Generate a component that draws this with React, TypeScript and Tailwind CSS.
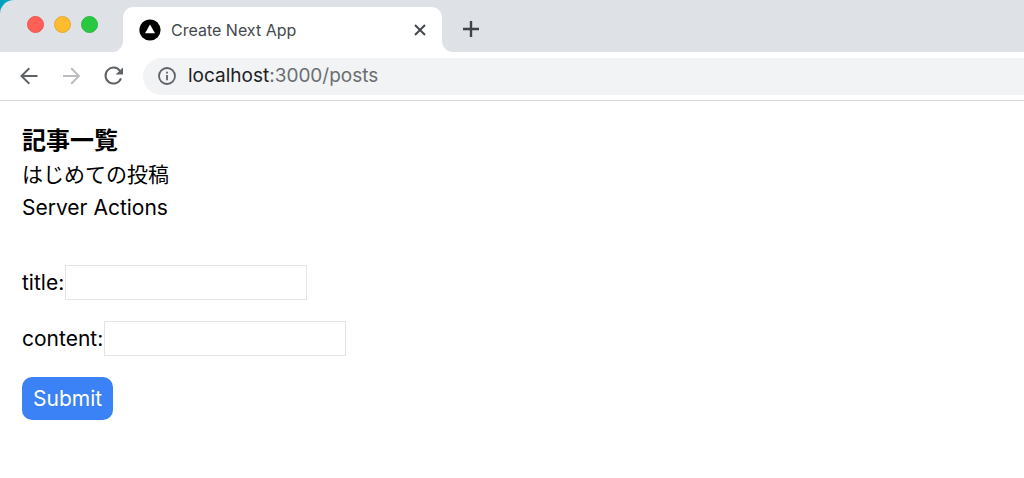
import React from "react";

function Favicon() {
  return (
    <svg width="22" height="22" viewBox="0 0 22 22" className="shrink-0" aria-hidden="true">
      <circle cx="11" cy="11" r="10.6" fill="#000" />
      <path d="M11 5.6 L16 14.2 H6 Z" fill="#fff" />
    </svg>
  );
}

function TabStrip() {
  return (
    <div className="flex h-[52px] bg-white">
      <div className="w-5 shrink-0 bg-[#00a0c0]">
        <div className="h-full rounded-tl-[14px] bg-[#dee1e6]" />
      </div>
      <div className="flex w-[103px] shrink-0 items-start gap-[10px] rounded-br-[11px] bg-[#dee1e6] pt-4 pl-[7px]">
        <button aria-label="Close window" className="size-[17px] shrink-0 rounded-full border border-[#ec564e] bg-[#ff5f57]" />
        <button aria-label="Minimize window" className="size-[17px] shrink-0 rounded-full border border-[#e6a935] bg-[#febc2e]" />
        <button aria-label="Zoom window" className="size-[17px] shrink-0 rounded-full border border-[#2db742] bg-[#28c840]" />
      </div>
      <div className="w-[319px] shrink-0 bg-[#dee1e6] pt-[7px]">
        <div className="flex h-[45px] items-center rounded-t-[10px] bg-white pr-[14px] pl-4">
          <Favicon />
          <span className="ml-[10px] flex-1 text-[16px] leading-6 text-[#45494d]">Create Next App</span>
          <button aria-label="Close tab">
            <svg width="16" height="16" viewBox="0 0 16 16" fill="none" stroke="#45494d" strokeWidth="2">
              <path d="M3 3 L13 13 M13 3 L3 13" />
            </svg>
          </button>
        </div>
      </div>
      <div className="flex flex-1 items-center rounded-bl-[11px] bg-[#dee1e6] pt-[6px] pl-5">
        <button aria-label="New tab">
          <svg width="18" height="18" viewBox="0 0 18 18" fill="none" stroke="#3f4347" strokeWidth="2.4">
            <path d="M9 1 V17 M1 9 H17" />
          </svg>
        </button>
      </div>
    </div>
  );
}

function Toolbar() {
  return (
    <div className="flex h-[49px] items-center border-b border-[#d9dadc] bg-white pl-[18px]">
      <div className="flex shrink-0 gap-5">
        <button aria-label="Back">
          <svg width="22" height="22" viewBox="0 0 22 22" fill="none" stroke="#5f6368" strokeWidth="2">
            <path d="M19.5 11 H4 M11.3 3.2 L3.5 11 L11.3 18.8" />
          </svg>
        </button>
        <button aria-label="Forward">
          <svg width="22" height="22" viewBox="0 0 22 22" fill="none" stroke="#bbbdc0" strokeWidth="2">
            <path d="M3 11 H18.5 M11.2 3.2 L19 11 L11.2 18.8" />
          </svg>
        </button>
        <button aria-label="Reload">
          <svg width="22" height="22" viewBox="0 0 22 22" fill="none">
            <path d="M18 5.8 A8 8 0 1 0 19 13.4" stroke="#5f6368" strokeWidth="2" />
            <path d="M21 2.4 V9.4 H13.6 Z" fill="#5f6368" />
          </svg>
        </button>
      </div>
      <div className="ml-[19px] flex h-[37px] flex-1 items-center rounded-l-full bg-[#f1f3f4] pl-[14px]">
        <svg width="20" height="20" viewBox="0 0 20 20" fill="none" className="shrink-0" aria-hidden="true">
          <circle cx="10" cy="10" r="8" stroke="#5f6368" strokeWidth="1.8" />
          <path d="M10 9 V14.2" stroke="#5f6368" strokeWidth="1.8" />
          <path d="M10 5.8 V7.6" stroke="#5f6368" strokeWidth="1.8" />
        </svg>
        <span className="ml-[11px] text-[19px] leading-6 text-[#6b6e71]">
          <span className="text-[#202124]">localhost</span>:3000/posts
        </span>
      </div>
    </div>
  );
}

function Field({ name }: { name: string }) {
  return (
    <div className="flex items-center gap-px">
      <label htmlFor={name}>{name}:</label>
      <input id={name} name={name} type="text" className="h-[35px] w-[242px] border border-[#e1e4e8] bg-white px-1" />
    </div>
  );
}

export default function App() {
  return (
    <div className="bg-white font-['Inter','Noto_Sans_CJK_JP',sans-serif] text-black">
      <header>
        <TabStrip />
        <Toolbar />
      </header>
      <main className="px-[22px] py-[22px] text-[21px] leading-[33px]">
        <h1 className="text-[24px] font-bold leading-[35px]">記事一覧</h1>
        <p>はじめての投稿</p>
        <p>Server Actions</p>
        <form className="mt-[41px] flex flex-col items-start gap-[21px]" onSubmit={(e) => e.preventDefault()}>
          <Field name="title" />
          <Field name="content" />
          <button type="submit" className="h-[43px] rounded-[10px] bg-[#3b82f6] px-[11px] text-white">
            Submit
          </button>
        </form>
      </main>
    </div>
  );
}
